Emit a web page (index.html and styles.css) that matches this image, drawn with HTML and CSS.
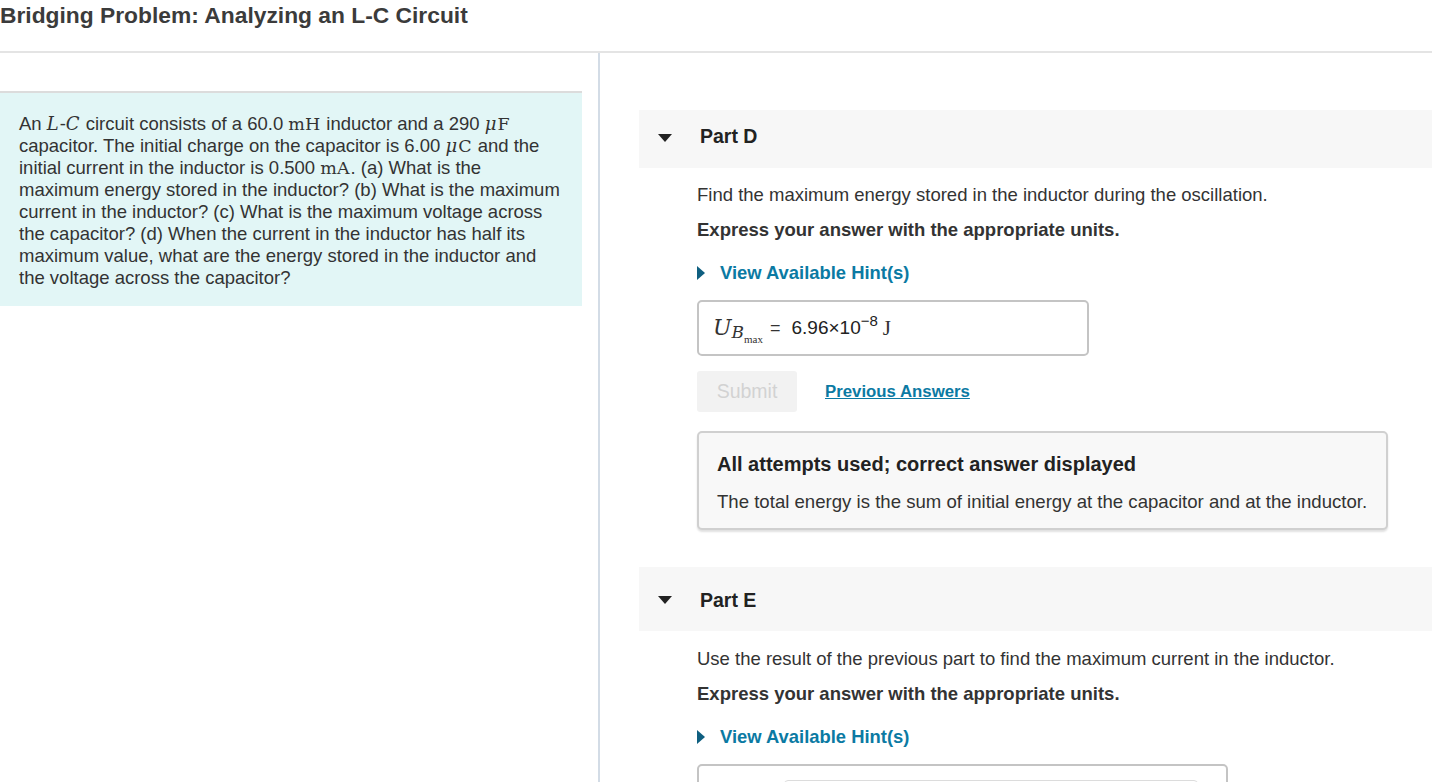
FILE: index.html
```html
<!DOCTYPE html>
<html>
<head>
<meta charset="utf-8">
<title>Bridging Problem</title>
<link rel="stylesheet" href="styles.css">
</head>
<body>
<header class="page-header">
  <h1 class="page-title">Bridging Problem: Analyzing an L-C Circuit</h1>
</header>
<main class="layout">
  <section class="left-col">
    <div class="problem">
      <p class="problem-text">An <span class="mi">L</span><span class="mo">-</span><span class="mi">C</span> circuit consists of a 60.0 <span class="mrm">mH</span> inductor and a 290 <span class="mi">μ</span><span class="mrm">F</span> capacitor. The initial charge on the capacitor is 6.00 <span class="mi">μ</span><span class="mrm">C</span> and the initial current in the inductor is 0.500 <span class="mrm">mA</span>. (a) What is the maximum energy stored in the inductor? (b) What is the maximum current in the inductor? (c) What is the maximum voltage across the capacitor? (d) When the current in the inductor has half its maximum value, what are the energy stored in the inductor and the voltage across the capacitor?</p>
    </div>
  </section>
  <section class="right-col">
    <div class="part">
      <div class="part-head">
        <span class="caret-down"></span>
        <span class="part-title">Part D</span>
      </div>
      <div class="part-body">
        <p class="prompt">Find the maximum energy stored in the inductor during the oscillation.</p>
        <p class="instr">Express your answer with the appropriate units.</p>
        <div class="hint"><span class="caret-right"></span><span class="hint-link">View Available Hint(s)</span></div>
        <div class="answer-box">
          <span class="mi big">U</span><span class="sub"><span class="mi">B</span><span class="sub2">max</span></span>
          <span class="eq">=</span>
          <span class="val">6.96×10<sup class="exp">−8</sup></span>
          <span class="unit">J</span>
        </div>
        <div class="actions">
          <button class="submit" type="button">Submit</button>
          <a class="prev-link" href="#">Previous Answers</a>
        </div>
        <div class="feedback">
          <p class="fb-title">All attempts used; correct answer displayed</p>
          <p class="fb-text">The total energy is the sum of initial energy at the capacitor and at the inductor.</p>
        </div>
      </div>
    </div>
    <div class="part part-e">
      <div class="part-head tall">
        <span class="caret-down"></span>
        <span class="part-title">Part E</span>
      </div>
      <div class="part-body">
        <p class="prompt">Use the result of the previous part to find the maximum current in the inductor.</p>
        <p class="instr">Express your answer with the appropriate units.</p>
        <div class="hint"><span class="caret-right"></span><span class="hint-link">View Available Hint(s)</span></div>
        <div class="answer-box wide">
          <div class="inner-field"></div>
        </div>
      </div>
    </div>
  </section>
</main>
</body>
</html>
```
FILE: styles.css
```css
* { box-sizing: border-box; }
html, body { margin: 0; padding: 0; }
body {
  font-family: "Liberation Sans", Arial, Helvetica, sans-serif;
  color: #333;
  background: #fff;
  width: 1432px;
  height: 782px;
  overflow: hidden;
}
p { margin: 0; }

.page-header {
  height: 53px;
  border-bottom: 2px solid #e4e4e4;
  padding-top: 2px;
}
.page-title {
  margin: 0;
  font-size: 22.8px;
  font-weight: bold;
  color: #3b3b3b;
  line-height: 26px;
}

.layout {
  display: grid;
  grid-template-columns: 600px 1fr;
  height: 729px;
  overflow: hidden;
}
.left-col {
  border-right: 2px solid #d3dce6;
  padding-top: 38px;
}
.problem {
  width: 582px;
  background: #e2f6f6;
  border-top: 2px solid #dcdcdc;
  padding: 20px 19px 17px;
}
.problem-text {
  font-size: 18.5px;
  line-height: 22px;
  color: #333;
  width: 546px;
}
.mi {
  font-family: "DejaVu Serif", "Liberation Serif", serif;
  font-style: italic;
  font-size: 18px;
  line-height: 1;
  padding-right: 1px;
}
.mo { font-family: "DejaVu Serif", serif; font-size: 18px; line-height: 1; }
.mrm {
  font-family: "DejaVu Serif", "Liberation Serif", serif;
  font-size: 17.5px;
  line-height: 1;
  padding-right: 1px;
}

.right-col {
  padding: 57px 0 0 39px;
}
.part-head {
  display: flex;
  align-items: center;
  height: 58px;
  background: #f7f7f7;
  padding-left: 19px;
}
.part-head.tall { height: 64px; }
.caret-down {
  width: 0; height: 0;
  border-left: 7px solid transparent;
  border-right: 7px solid transparent;
  border-top: 8px solid #222;
  margin-right: 28px;
  margin-top: -2px;
}
.part-head.tall .caret-down { margin-top: 2px; }
.part-title {
  font-size: 19.5px;
  font-weight: bold;
  color: #222;
  margin-top: -5px;
}
.part-head.tall .part-title { margin-top: 2px; }
.part-body {
  padding-left: 58px;
  padding-top: 16px;
}
.prompt {
  font-size: 18.5px;
  line-height: 22px;
  color: #333;
}
.instr {
  font-size: 18.5px;
  line-height: 22px;
  font-weight: bold;
  color: #333;
  margin-top: 13px;
}
.hint {
  display: flex;
  align-items: center;
  margin-top: 21px;
  height: 22px;
}
.caret-right {
  width: 0; height: 0;
  border-top: 7px solid transparent;
  border-bottom: 7px solid transparent;
  border-left: 8px solid #0f5f80;
  margin-right: 15px;
}
.hint-link {
  font-size: 18.4px;
  font-weight: bold;
  color: #0b7aa3;
}
.answer-box {
  margin-top: 16px;
  width: 392px;
  height: 56px;
  border: 2px solid #c4c4c4;
  border-radius: 5px;
  display: flex;
  align-items: center;
  padding-left: 14px;
}
.answer-box .mi { padding-right: 0; }
.answer-box.wide {
  width: 531px;
  margin-top: 16px;
  align-items: flex-start;
  padding-left: 85px;
}
.inner-field {
  width: 414px;
  height: 30px;
  margin-top: 14px;
  border: 1px solid #dcdcdc;
  border-radius: 4px;
}
.big { font-size: 22px; }
.sub {
  position: relative;
  top: 4px;
  font-size: 15px;
}
.sub .mi { font-size: 17px; }
.sub2 {
  font-family: "Liberation Serif", serif;
  font-size: 11px;
  position: relative;
  top: 5px;
}
.eq {
  margin: 0 11px 0 7px;
  font-size: 18px;
}
.val {
  font-size: 19px;
  color: #222;
}
.exp {
  font-size: 15px;
  vertical-align: 8px;
  line-height: 0;
}
.unit {
  font-family: "Liberation Serif", serif;
  font-size: 21px;
  margin-left: 5px;
}

.actions {
  display: flex;
  align-items: center;
  margin-top: 15px;
}
.submit {
  width: 100px;
  height: 41px;
  background: #f2f2f2;
  border: none;
  border-radius: 3px;
  color: #d2d2d2;
  font-family: "Liberation Sans", Arial, sans-serif;
  font-size: 19.5px;
  padding: 0;
}
.prev-link {
  margin-left: 28px;
  font-size: 16.8px;
  font-weight: bold;
  color: #0b7aa3;
  text-decoration: underline;
}
.feedback {
  margin-top: 19px;
  width: 691px;
  height: 99px;
  background: #f8f8f8;
  border: 2px solid #d0d0d0;
  border-radius: 5px;
  box-shadow: 0 2px 2px rgba(0,0,0,0.12);
  padding: 19px 18px 0;
}
.fb-title {
  font-size: 20px;
  font-weight: bold;
  color: #222;
  line-height: 24px;
}
.fb-text {
  font-size: 18.6px;
  line-height: 22px;
  color: #333;
  margin-top: 15px;
}
.part-e { margin-top: 37px; }
.part-e .part-body { padding-top: 17px; }
```
